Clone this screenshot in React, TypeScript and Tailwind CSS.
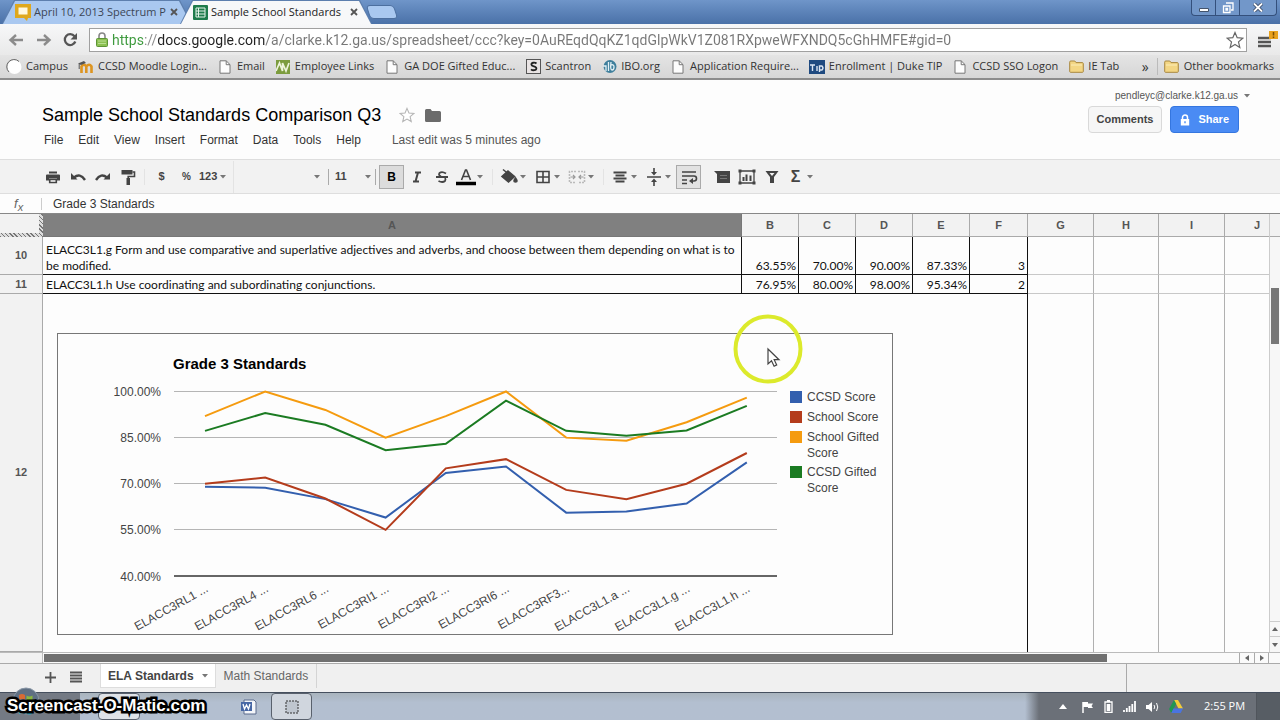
import { useState, type ReactNode } from "react";
import clsx from "clsx";

/* ---------- data ---------- */

const menus = ["File", "Edit", "View", "Insert", "Format", "Data", "Tools", "Help"];

const rows = [
  {
    n: 10,
    text: "ELACC3L1.g Form and use comparative and superlative adjectives and adverbs, and choose between them depending on what is to be modified.",
    values: ["63.55%", "70.00%", "90.00%", "87.33%", "3"],
    height: "h-[38px]",
  },
  {
    n: 11,
    text: "ELACC3L1.h Use coordinating and subordinating conjunctions.",
    values: ["76.95%", "80.00%", "98.00%", "95.34%", "2"],
    height: "h-[19px]",
  },
];

const standards = ["RL1 ...", "RL4 ...", "RL6 ...", "RI1 ...", "RI2 ...", "RI6 ...", "RF3...", "L1.a ...", "L1.g ...", "L1.h ..."];

const series = [
  { name: ["CCSD Score"], color: "#335fae", values: [69, 68.7, 65, 59, 73.5, 75.6, 60.6, 61, 63.55, 76.95] },
  { name: ["School Score"], color: "#b43c1c", values: [70, 72, 65.2, 55, 75, 78, 68, 65, 70, 80] },
  { name: ["School Gifted", "Score"], color: "#f59b0f", values: [92, 100, 94, 85, 92, 100, 85, 84, 90, 98] },
  { name: ["CCSD Gifted", "Score"], color: "#1b7b22", values: [87.2, 93, 89.2, 80.9, 83, 97, 87.2, 85.6, 87.33, 95.34] },
];

/* ---------- browser icons ---------- */

const PageIcon = () => (
  <svg viewBox="0 0 12 14" className="h-[14px] w-3">
    <path d="M1 .8h6.2L11 4.6v8.6H1z" fill="#fdfdfd" stroke="#777" />
    <path d="M7.2 1v3.7H11" fill="none" stroke="#777" />
  </svg>
);

const FolderIcon = () => (
  <svg viewBox="0 0 15 13" className="h-[13px] w-[15px]">
    <path d="M.7 11.5V2.2C.7 1.4 1 1 1.8 1h4l1.2 1.6h6.3c.6 0 1 .4 1 1v7.9c0 .5-.3.8-.8.8h-12c-.5 0-.8-.3-.8-.8z" fill="#f3d684" stroke="#a8873f" />
    <path d="M2 5h11" stroke="#fbedb8" />
  </svg>
);

const CampusIcon = () => (
  <svg viewBox="0 0 16 16" className="size-4">
    <circle cx="8.5" cy="8" r="7" fill="#fff" />
    <path d="M13 2.5A7 7 0 1 0 3 13" fill="none" stroke="#666" />
  </svg>
);

const MoodleIcon = () => (
  <svg viewBox="0 0 16 16" className="size-4">
    <path d="M3.5 14V7.5q2.500-3.500 4.800 0V14M8.300 7.500q3-3.500 5.200 0V14" fill="none" stroke="#dd9420" strokeWidth="2.6" />
    <path d="M0 4.500 6 2l2 2-5 2z" fill="#555" />
    <path d="M1.200 5v5" stroke="#555" />
  </svg>
);

const EmployeeIcon = () => (
  <svg viewBox="0 0 14 14" className="size-[14px]">
    <rect width="14" height="14" fill="#7c9c3e" />
    <path d="M0 11 3.500 3l3 8V3l3.500 8L13 3" fill="none" stroke="#eef4dc" strokeWidth="1.7" />
  </svg>
);

const ScantronIcon = () => (
  <svg viewBox="0 0 15 15" className="size-[15px]">
    <rect x=".5" y=".5" width="14" height="14" fill="#e9e4e4" stroke="#555" />
    <path d="M10.500 4.500C9 3.200 5.300 3.400 5.400 5.600c.2 2.300 5 1.200 5 3.700 0 2.200-3.700 2.500-5.400 1" fill="none" stroke="#222" strokeWidth="1.8" />
  </svg>
);

const IboIcon = () => (
  <svg viewBox="0 0 15 15" className="size-[15px]">
    <circle cx="8" cy="7.500" r="6.500" fill="#3f7f9c" />
    <path d="M1 7h3v5M6.500 3v9M9 3q-1 8 1 8t2-3-3-2" fill="none" stroke="#e4f1f5" strokeWidth="1.300" />
  </svg>
);

const DukeIcon = () => (
  <svg viewBox="0 0 16 14" className="h-[14px] w-4">
    <rect width="16" height="14" fill="#1f4a80" />
    <path d="M1 5h5M3.500 5v6M8 6v5M10.500 12V6h2.500q2 2 0 4h-2" fill="none" stroke="#dbe5f2" strokeWidth="1.400" />
  </svg>
);

const bookmarks = [
  { name: "Campus", icon: CampusIcon },
  { name: "CCSD Moodle Login...", icon: MoodleIcon },
  { name: "Email", icon: PageIcon },
  { name: "Employee Links", icon: EmployeeIcon },
  { name: "GA DOE Gifted Educ...", icon: PageIcon },
  { name: "Scantron", icon: ScantronIcon },
  { name: "IBO.org", icon: IboIcon },
  { name: "Application Require...", icon: PageIcon },
  { name: "Enrollment | Duke TIP", icon: DukeIcon },
  { name: "CCSD SSO Logon", icon: PageIcon },
  { name: "IE Tab", icon: FolderIcon },
];

const Star = ({ className }: { className: string }) => (
  <svg viewBox="0 0 18 18" className={className}>
    <path d="m9 1.500 2.200 5.200 5.600.5-4.300 3.700 1.300 5.500L9 13.500l-4.800 2.900 1.300-5.500L1.200 7.200l5.600-.5z" fill="#fff" stroke="currentColor" strokeWidth="1.200" />
  </svg>
);

const Caret = () => (
  <svg viewBox="0 0 6 4" className="h-1 w-[6px] shrink-0">
    <path d="M0 0h6L3 3.500z" fill="#777" />
  </svg>
);

/* ---------- browser chrome ---------- */

function BrowserTab({ title, active, width, icon }: { title: string; active?: boolean; width: string; icon: ReactNode }) {
  return (
    <div className={clsx("relative -mr-3 flex h-6 items-center", width, active && "z-10")}>
      <div className="absolute inset-x-0 top-0 bottom-0 bg-[#5d7fae] [clip-path:polygon(0_100%,12px_0,calc(100%-12px)_0,100%_100%)]" />
      <div
        className={clsx(
          "absolute inset-x-px top-px bottom-0 [clip-path:polygon(0_100%,12px_0,calc(100%-12px)_0,100%_100%)]",
          active ? "bg-[#f7f8f9]" : "bg-[#a9c8f0]"
        )}
      />
      <button className="relative ml-[13px] flex min-w-0 flex-1 items-center gap-[3px]">
        <span className="shrink-0">{icon}</span>
        <span className={clsx("flex-1 text-left whitespace-nowrap", active ? "text-[#222]" : "text-[#3c4656]")}>{title}</span>
      </button>
      <button aria-label="Close tab" className="relative mr-[14px] text-[#555]">
        <svg viewBox="0 0 8 8" className="size-2">
          <path d="m1 1 6 6M7 1 1 7" stroke="currentColor" strokeWidth="1.800" />
        </svg>
      </button>
    </div>
  );
}

function TabStrip() {
  return (
    <div className="flex h-6 items-start bg-linear-to-b from-[#6f95c9] to-[#4a71a8] pl-[2px] text-[11px]">
      <BrowserTab
        title="April 10, 2013 Spectrum P"
        width="w-[190px]"
        icon={
          <svg viewBox="0 0 16 17" className="h-[17px] w-4">
            <path d="M0 0h16v14h-3l-1 3-3-3H0z" fill="#dfa81d" />
            <path d="M3.500 3.500h9v7h-9z" fill="#fff8df" />
          </svg>
        }
      />
      <BrowserTab
        title="Sample School Standards"
        width="w-[192px]"
        active
        icon={
          <svg viewBox="0 0 15 15" className="size-[15px]">
            <rect width="15" height="15" rx="1" fill="#1e7b4b" />
            <path d="M3 3h9v9H3zM3 6h9M3 9h9M5.500 3v9" fill="none" stroke="#e5f3ea" />
          </svg>
        }
      />
      <button aria-label="New tab" className="mt-[5px] ml-2 h-[14px] w-7 -skew-x-[-18deg] rounded-sm border border-[#4c6f9f] bg-[#a9c8f0]" />
      <div className="mr-[3px] ml-auto flex h-4 items-stretch rounded-b border border-t-0 border-[#34507c] bg-[#7297c9] text-white">
        <button aria-label="Minimize" className="flex w-6 items-center justify-center border-r border-[#34507c]">
          <svg viewBox="0 0 10 4" className="mt-1 h-1 w-[10px]">
            <path d="M.5.5h9v3h-9z" fill="#fff" stroke="#44546c" />
          </svg>
        </button>
        <button aria-label="Restore" className="flex w-6 items-center justify-center border-r border-[#34507c]">
          <svg viewBox="0 0 12 12" className="size-3">
            <path d="M4 1h7v7H9M1.500 4h6.500v6.500H1.500zM4 6.500h1.500v1.500H4z" fill="none" stroke="#fff" strokeWidth="1.300" />
          </svg>
        </button>
        <button aria-label="Close window" className="flex w-9 items-center justify-center">
          <svg viewBox="0 0 10 9" className="h-[9px] w-[10px]">
            <path d="m1 .5 8 8M9 .5l-8 8" stroke="#3a4a66" strokeWidth="3.500" />
            <path d="m1 .5 8 8M9 .5l-8 8" stroke="#fff" strokeWidth="1.800" />
          </svg>
        </button>
      </div>
    </div>
  );
}

function AddressBar() {
  return (
    <div className="flex h-[31px] items-center bg-linear-to-b from-[#f7f8f9] to-[#e9e9e9] pr-[2px] pl-2 text-[#666]">
      <button aria-label="Back" className="w-[28px]">
        <svg viewBox="0 0 16 14" className="h-[14px] w-4">
          <path d="M8 2 2.500 7 8 12M2.500 7H15" fill="none" stroke="#8b8b8b" strokeWidth="2.400" />
        </svg>
      </button>
      <button aria-label="Forward" className="w-[26px]">
        <svg viewBox="0 0 16 14" className="h-[14px] w-4">
          <path d="m8 2 5.500 5L8 12M13.500 7H1" fill="none" stroke="#8b8b8b" strokeWidth="2.400" />
        </svg>
      </button>
      <button aria-label="Reload" className="w-[27px]">
        <svg viewBox="0 0 16 16" className="size-4">
          <path d="M12.500 4.300A5.400 5.400 0 1 0 13.300 9.500" fill="none" stroke="#555" strokeWidth="2.300" />
          <path d="M15 1v6.500H8.500z" fill="#555" />
        </svg>
      </button>
      <div className="flex h-6 flex-1 items-center border border-[#a0a0a0] bg-white pr-[2px] pl-[6px]">
        <svg viewBox="0 0 12 15" className="mr-[4px] h-[15px] w-3">
          <path d="M3 7V4a3 3 0 0 1 6 0v3" fill="none" stroke="#888" strokeWidth="1.600" />
          <rect x=".5" y="6.500" width="11" height="8" rx="1" fill="#8cc152" stroke="#5d9436" />
          <path d="M2 9h8M2 11.500h8" stroke="#b9de93" />
        </svg>
        <input
          aria-label="Address"
          defaultValue="https://docs.google.com/a/clarke.k12.ga.us/spreadsheet/ccc?key=0AuREqdQqKZ1qdGlpWkV1Z081RXpweWFXNDQ5cGhHMFE#gid=0"
          className="min-w-0 flex-1 bg-[linear-gradient(to_right,#3d9a3d_0_32px,#888_32px_46px,#222_46px_153px,#777_153px)] bg-clip-text pt-px font-[Roboto,sans-serif] text-[14px] text-transparent outline-none"
        />
        <button aria-label="Bookmark this page">
          <Star className="size-[18px] text-[#666]" />
        </button>
      </div>
      <button aria-label="Menu" className="ml-[11px]">
        <svg viewBox="0 0 20 20" className="size-5">
          <path d="M0 8h13M0 12h13M0 16h13" stroke="#555" strokeWidth="2.600" />
          <rect x="11" y="1" width="9" height="8" fill="#e8a11c" />
          <path d="M15.500 2v3.500M15.500 6.500V8" stroke="#7a4c00" strokeWidth="1.500" />
        </svg>
      </button>
    </div>
  );
}

function BookmarksBar() {
  return (
    <nav className="flex h-[25px] items-center border-b-2 border-[#8c8c8c] bg-linear-to-b from-[#e4e4e4] to-[#d6d6d6] px-[6px] text-[11px] whitespace-nowrap text-[#333]">
      <div className="flex flex-1 items-center gap-[10px]">
        {bookmarks.map((b) => (
          <a key={b.name} href="#" className="flex items-center gap-1">
            <span className="flex w-4 justify-center">
              <b.icon />
            </span>
            {b.name}
          </a>
        ))}
      </div>
      <button className="mr-2 text-[14px]" aria-label="More bookmarks">»</button>
      <a href="#" className="flex items-center gap-[5px] border-l border-[#bbb] pl-[6px]">
        <FolderIcon />
        Other bookmarks
      </a>
    </nav>
  );
}

/* ---------- document header ---------- */

function DocHeader() {
  return (
    <header className="flex h-[79px] justify-between pr-[30px] pl-[42px]">
      <div className="pt-[22px]">
        <div className="flex items-center">
          <h1 className="text-[18px] leading-[26px] text-black">Sample School Standards Comparison Q3</h1>
          <button aria-label="Star" className="ml-[18px]">
            <Star className="size-4 text-[#b5b5b5]" />
          </button>
          <button aria-label="Move to folder" className="ml-[10px]">
            <svg viewBox="0 0 16 13" className="h-[13px] w-4">
              <path d="M0 1.500Q0 0 1.500 0h4L7 2h7.500Q16 2 16 3.500v8q0 1.500-1.500 1.500h-13Q0 13 0 11.500z" fill="#6b6b6b" />
            </svg>
          </button>
        </div>
        <div className="mt-[2px] flex items-center gap-[15px] pl-[2px] text-[12px] leading-5 text-[#333]">
          {menus.map((m) => (
            <button key={m}>{m}</button>
          ))}
          <a href="#" className="ml-4 text-[#555]">
            Last edit was 5 minutes ago
          </a>
        </div>
      </div>
      <div className="flex flex-col pt-2">
        <button className="flex items-center gap-[6px] self-end text-[10px] leading-4 text-[#555]">
          pendleyc@clarke.k12.ga.us <Caret />
        </button>
        <div className="mt-[2px] mr-[11px] flex gap-2 text-[11px] font-bold">
          <button className="h-[27px] rounded-sm border border-[#d9d9d9] bg-[#f6f6f6] px-2 text-[#444]">Comments</button>
          <button className="flex h-[27px] items-center gap-2 rounded-sm border border-[#3576df] bg-[#4a8bf4] px-[9px] text-white">
            <svg viewBox="0 0 10 12" className="h-3 w-[10px]">
              <path d="M2.500 5V3.500a2.500 2.500 0 0 1 5 0V5" fill="none" stroke="#fff" strokeWidth="1.500" />
              <path d="M.8 5h8.400v6.500H.8zM4.300 7.200v2h1.400v-2z" fill="#fff" fillRule="evenodd" />
            </svg>
            Share
          </button>
        </div>
      </div>
    </header>
  );
}

/* ---------- toolbar ---------- */

function Tool({ label, on, menu, children }: { label: string; on?: boolean; menu?: boolean; children: ReactNode }) {
  return (
    <button
      aria-label={label}
      className={clsx("flex h-6 items-center", menu ? "w-[34px]" : "w-[25px]", on && "border border-[#aaa] bg-[#e2e2e2]")}
    >
      <span className="flex flex-1 items-center justify-center">{children}</span>
      {menu && (
        <span className="flex w-[11px]">
          <Caret />
        </span>
      )}
    </button>
  );
}

const Icon = ({ children }: { children: ReactNode }) => (
  <svg viewBox="0 0 18 18" className="size-[18px]" fill="none" stroke="#444" strokeWidth="1.600">
    {children}
  </svg>
);

const Divider = ({ dark }: { dark?: boolean }) => <span className={clsx("h-4 w-px", dark ? "bg-[#aaa]" : "mx-1 bg-[#e3e3e3]")} />;

function Toolbar() {
  const [bold, setBold] = useState(true);

  return (
    <div className="flex h-[35px] items-center border-y border-[#dedede] bg-[#f2f2f2] pl-10 text-[11px] font-bold text-[#444]">
      <Tool label="Print">
        <Icon>
          <path d="M5 3.500h8v2H5zM3 6.500h12q1 0 1 1v5h-3v-2H5v2H2v-5q0-1 1-1z" fill="#444" stroke="none" />
          <path d="M5.700 11.500h6.600v3H5.700z" fill="#fff" />
        </Icon>
      </Tool>
      <Tool label="Undo">
        <Icon>
          <path d="M2 5v6.500h6.500z" fill="#444" stroke="none" />
          <path d="M5 9.500q6-5 11 2.500" strokeWidth="2.400" />
        </Icon>
      </Tool>
      <Tool label="Redo">
        <Icon>
          <path d="M16 5v6.500H9.500z" fill="#444" stroke="none" />
          <path d="M13 9.500Q7 4.500 2 12" strokeWidth="2.400" />
        </Icon>
      </Tool>
      <Tool label="Paint format">
        <Icon>
          <path d="M2.500 2h11v4.500h-11zM7.500 10h3.500v7H7.500z" fill="#444" stroke="none" />
          <path d="M13.500 4h2v4.500H9.200V11" />
        </Icon>
      </Tool>
      <Divider />
      <Tool label="Format as currency">$</Tool>
      <Tool label="Format as percent">
        <span className="text-[10px]">%</span>
      </Tool>
      <button aria-label="More formats" className="flex h-6 w-[34px] items-center gap-[3px]">
        123
        <Caret />
      </button>
      <span className="h-8 w-px bg-[#e3e3e3]" />
      <label className="flex w-[94px] items-center pr-2">
        <select aria-label="Font" className="min-w-0 flex-1 appearance-none outline-none" defaultValue="">
          <option value=""></option>
          <option>Arial</option>
        </select>
        <Caret />
      </label>
      <Divider dark />
      <label className="flex w-[46px] items-center pr-1 pl-[6px]">
        <select aria-label="Font size" className="min-w-0 flex-1 appearance-none outline-none">
          <option>11</option>
        </select>
        <Caret />
      </label>
      <Divider dark />
      <span className="w-[3px]" />
      <button
        aria-label="Bold"
        onClick={() => setBold(!bold)}
        className={clsx("h-6 w-[25px] text-[12px] font-black text-black", bold && "border border-[#aaa] bg-[#dcdcdc]")}
      >
        B
      </button>
      <Tool label="Italic">
        <Icon>
          <path d="M7 4.500h6M5 13.500h6M10 4.500l-2.500 9" strokeWidth="2" />
        </Icon>
      </Tool>
      <Tool label="Strikethrough">
        <Icon>
          <path d="M13 5.500q-4-2.500-6.500-.5-1.500 2 1.500 3.500M5.500 13q4 2 6.500 0 1-1.500 0-3M3 9h12" strokeWidth="1.800" />
        </Icon>
      </Tool>
      <Tool label="Text color" menu>
        <svg viewBox="0 0 20 18" className="h-[18px] w-5" fill="none" stroke="#444" strokeWidth="1.600">
          <path d="M5.500 12 9.500 2h1l4 10M7 8.500h6" />
          <path d="M0 15.500h20" stroke="#000" strokeWidth="3.500" />
        </svg>
      </Tool>
      <Divider />
      <Tool label="Fill color" menu>
        <Icon>
          <path d="m8 3 6.500 5.500-6 5.500L2 8.500z" fill="#444" />
          <path d="m3 1.500 5 4M15.500 10q3 4 0 4t0-4z" fill="#444" />
        </Icon>
      </Tool>
      <Tool label="Borders" menu>
        <Icon>
          <path d="M3 3.500h12v11H3zM9 3.500v11M3 9h12" />
        </Icon>
      </Tool>
      <Tool label="Merge cells" menu>
        <Icon>
          <path d="M8 3.500H1.500v11H8M10 3.500h6.500v11H10" stroke="#bbb" strokeDasharray="2 1" />
          <path d="M2.500 9h4M11.500 9h4M5 7l2 2-2 2M13 7l-2 2 2 2" stroke="#999" strokeWidth="1.200" />
        </Icon>
      </Tool>
      <Divider />
      <Tool label="Horizontal align" menu>
        <Icon>
          <path d="M2.500 4.500h13M4.500 7.500h9M2.500 10.500h13M4.500 13.500h9" strokeWidth="1.900" />
        </Icon>
      </Tool>
      <Tool label="Vertical align" menu>
        <Icon>
          <path d="M2 9h14M9 0v5M9 18v-5" />
          <path d="m6 4 3 3.500L12 4zM6 14l3-3.500 3 3.500z" fill="#444" stroke="none" />
        </Icon>
      </Tool>
      <Tool label="Wrap text" on>
        <Icon>
          <path d="M2 4h14M2 8h12q2.500 0 2.500 2.500T14 13h-2M2 12h5M2 15.500h5" />
          <path d="m13 10-4 3 4 3z" fill="#444" stroke="none" />
        </Icon>
      </Tool>
      <span className="w-2" />
      <Tool label="Insert comment">
        <Icon>
          <path d="M1 3h16v12H4V6z" fill="#444" stroke="none" />
          <path d="M7 7.500h7M7 10.500h7" stroke="#777" strokeWidth="1" />
        </Icon>
      </Tool>
      <Tool label="Insert chart">
        <Icon>
          <path d="M2 3h14v12H2z" strokeWidth="1.300" />
          <path d="M5.500 13V9M8.500 13V6.500M12.500 13V7.500" strokeWidth="2" />
          <path d="M.5 1.500h3v3h-3zM14.500 1.500h3v3h-3zM.5 13.500h3v3h-3zM14.500 13.500h3v3h-3z" fill="#444" stroke="none" />
        </Icon>
      </Tool>
      <Tool label="Filter">
        <Icon>
          <path d="M2.500 3h13L11 9v6H7V9zM6.500 5l2.500 3 2.500-3z" fill="#444" fillRule="evenodd" stroke="none" />
        </Icon>
      </Tool>
      <Tool label="Functions" menu>
        <span className="text-[16px]">Σ</span>
      </Tool>
    </div>
  );
}

/* ---------- chart ---------- */

const px = (i: number) => 147 + i * 60.2;
const py = (v: number) => 57.5 + (100 - v) * 3.075;

function StandardsChart() {
  return (
    <svg viewBox="0 0 834 300" className="h-[302px] w-[836px] border border-[#777] bg-[#fdfdfd] text-[12px]" fill="#444">
      <text x="115" y="35" className="text-[15px] font-bold" fill="#000">
        Grade 3 Standards
      </text>
      {[100, 85, 70, 55, 40].map((v) => (
        <g key={v}>
          <line
            x1="116"
            x2="719"
            y1={v === 40 ? 242 : Math.floor(py(v)) + 0.5}
            y2={v === 40 ? 242 : Math.floor(py(v)) + 0.5}
            stroke={v === 40 ? "#666" : "#b5b5b5"}
            strokeWidth={v === 40 ? 2 : 1}
          />
          <text x="103" y={Math.floor(py(v)) + 5} textAnchor="end">
            {v}.00%
          </text>
        </g>
      ))}
      {series.map((s) => (
        <polyline key={s.color} points={s.values.map((v, i) => `${px(i)},${py(v)}`).join(" ")} fill="none" stroke={s.color} strokeWidth="2" />
      ))}
      {standards.map((s, i) => (
        <text key={s} textAnchor="end" transform={`translate(${px(i) + 4} 257) rotate(-29)`}>
          ELACC3{s}
        </text>
      ))}
      {series.map((s, i) => {
        const y = [57, 77, 97, 132][i];
        return (
          <g key={s.color}>
            <rect x="732" y={y} width="12" height="12" fill={s.color} />
            {s.name.map((line, j) => (
              <text key={line} x="749" y={y + 10 + j * 16}>
                {line}
              </text>
            ))}
          </g>
        );
      })}
    </svg>
  );
}

/* ---------- grid ---------- */

const thClass = "border-r border-b border-[#aaa] bg-[#f2f2f2] font-bold text-[#555]";

function Grid() {
  return (
    <table className="h-full w-full table-fixed border-separate border-spacing-0 text-[11px]">
      <colgroup>
        <col className="w-[43px]" />
        <col />
        <col className="w-[57px]" />
        <col className="w-[57px]" />
        <col className="w-[57px]" />
        <col className="w-[57px]" />
        <col className="w-[58px]" />
        <col className="w-[66px]" />
        <col className="w-[65px]" />
        <col className="w-[66px]" />
        <col className="w-[44px]" />
      </colgroup>
      <thead>
        <tr>
          <th className="h-[23px] bg-[repeating-linear-gradient(45deg,#777_0_1px,#ddd_1px_3px)] p-0 pr-1 pb-1">
            <div className="h-[19px] bg-[#f2f2f2]" />
          </th>
          <th className="border-r border-b border-[#777] bg-[#808080] p-0 font-bold text-[#555]">A</th>
          {["B", "C", "D", "E", "F", "G", "H", "I"].map((c) => (
            <th key={c} className={thClass}>
              {c}
            </th>
          ))}
          <th className="border-b border-[#aaa] bg-[#f2f2f2] p-0 pl-5 font-bold text-[#555]">J</th>
        </tr>
      </thead>
      <tbody>
        {rows.map((r) => (
          <tr key={r.n} className={r.height}>
            <th className={clsx(thClass, "p-0")}>{r.n}</th>
            <td className="border-r border-b border-[#111] p-0 pl-[3px] align-bottom font-[Lato,sans-serif] text-[12px] leading-4 text-[#111]">
              {r.text}
            </td>
            {r.values.map((v, i) => (
              <td
                key={i}
                className="border-r border-b border-[#111] p-0 pr-[2px] text-right align-bottom font-[Lato,sans-serif] text-[12px] leading-4 text-[#111]"
              >
                {v}
              </td>
            ))}
            {[0, 1, 2].map((i) => (
              <td key={i} className="border-r border-b border-r-[#b0b0b0] border-b-[#c8c8c8] p-0" />
            ))}
            <td className="border-b border-[#c8c8c8] p-0" />
          </tr>
        ))}
        <tr>
          <th className={clsx(thClass, "p-0")}>12</th>
          <td colSpan={6} className="border-r border-[#111] p-0 pt-[39px] pl-[14px] align-top">
            <StandardsChart />
          </td>
          {[0, 1, 2].map((i) => (
            <td key={i} className="border-r border-[#b0b0b0] p-0" />
          ))}
          <td />
        </tr>
      </tbody>
    </table>
  );
}

const Arrow = ({ d }: { d: string }) => (
  <svg viewBox="0 0 6 6" className="size-[6px]">
    <path d={d} fill="#666" />
  </svg>
);

function VerticalScroll() {
  return (
    <div className="flex w-[11px] flex-col border-l border-[#ccc] bg-[#f7f7f7]">
      <div className="h-[23px] border-b border-[#aaa] bg-[#f2f2f2]" />
      <div className="mt-[51px] ml-px h-14 w-2 bg-[#777]" />
      <button aria-label="Scroll up" className="mt-auto flex h-4 items-center justify-center border-y border-[#ccc]">
        <Arrow d="M0 5h6L3 1z" />
      </button>
      <button aria-label="Scroll down" className="flex h-[15px] items-center justify-center">
        <Arrow d="M0 1h6L3 5z" />
      </button>
    </div>
  );
}

function HorizontalScroll() {
  return (
    <div className="flex h-[11px] border-t border-[#bbb] bg-[#fafafa]">
      <div className="w-[43px] border-r border-[#bbb] bg-[#f2f2f2]" />
      <div className="flex flex-1 items-center px-px">
        <div className="h-2 w-[89%] bg-[#707070]" />
      </div>
      <button aria-label="Scroll left" className="flex w-[15px] items-center justify-center border-l border-[#aaa]">
        <Arrow d="M5 0v6L1 3z" />
      </button>
      <button aria-label="Scroll right" className="mr-[11px] flex w-[15px] items-center justify-center border-x border-[#aaa]">
        <Arrow d="M1 0v6l4-3z" />
      </button>
    </div>
  );
}

function SheetTabs() {
  return (
    <div className="flex h-[29px] items-start border-t border-[#aaa] bg-[#f0f0f0] text-[12px] text-[#666]">
      <button aria-label="Add sheet" className="ml-[45px] flex h-[26px] w-[11px] items-center">
        <svg viewBox="0 0 11 11" className="size-[11px]">
          <path d="M5.500 0v11M0 5.500h11" stroke="#555" strokeWidth="1.800" />
        </svg>
      </button>
      <button aria-label="All sheets" className="mr-[18px] ml-[14px] flex h-[26px] w-3 items-center">
        <svg viewBox="0 0 12 12" className="size-3">
          <path d="M0 1.500h12M0 4.500h12M0 7.500h12M0 10.500h12" stroke="#555" strokeWidth="1.800" />
        </svg>
      </button>
      <button className="flex h-6 items-center gap-2 border-x border-b border-[#ddd] bg-white px-[7px] font-bold text-[#444]">
        ELA Standards
        <Caret />
      </button>
      <button className="h-6 border-r border-[#d4d4d4] px-2">Math Standards</button>
      <div className="mr-[153px] ml-auto h-full w-px bg-[#aaa]" />
    </div>
  );
}

/* ---------- desktop ---------- */

function Taskbar() {
  return (
    <footer className="flex h-7 items-stretch border-t border-[#454f5e] bg-linear-to-b from-[#a9b4bd] to-[#b3bfd0] to-35%">
      <div className="w-20 bg-[#747a84]">
        <button aria-label="Start" className="-mt-[6px] ml-3">
          <svg viewBox="0 0 28 28" className="size-7">
            <circle cx="14" cy="14" r="13" fill="#5f6f82" stroke="#8896a6" />
            <path d="M7 8q3-2 6 0v5q-3-2-6 0z" fill="#d86b34" />
            <path d="M14.500 8.500q3 2 6 0v5q-3 2-6 0z" fill="#8bb83c" />
            <path d="M7 15q3-2 6 0v12q-3-2-6 0z" fill="#27b4d6" />
            <path d="M14.500 15.500q3 2 6 0v11q-3 2-6 0z" fill="#27b4d6" />
          </svg>
        </button>
      </div>
      <button aria-label="Browser" className="ml-[18px] w-[42px] rounded-sm border border-[#59616d] bg-[#dfe3e8]" />
      <button aria-label="Word" className="ml-[101px] flex items-center">
        <svg viewBox="0 0 16 16" className="size-4">
          <path d="M3 1h10l2 2v12H3z" fill="#f4f6fa" stroke="#5b6b8c" />
          <rect y="3" width="11" height="9" fill="#4767a5" />
          <path d="m2 5 1.500 5L5.500 6l2 4L9 5" fill="none" stroke="#fff" strokeWidth="1.300" />
        </svg>
      </button>
      <button aria-label="Screen recorder" className="ml-[14px] flex w-[41px] items-center justify-center rounded-sm border border-[#59616d] bg-[#d0d6de]">
        <svg viewBox="0 0 14 14" className="size-[14px]">
          <path d="M1 1h12v12H1z" fill="#bfc6cf" stroke="#333" strokeDasharray="2 1" />
        </svg>
      </button>
      <div className="ml-auto flex w-[231px] items-center gap-[10px] bg-[linear-gradient(to_right,transparent,#6b7078_14px)] pl-[34px] font-['Open_Sans',sans-serif] text-[11px] text-white">
        <button aria-label="Show hidden icons" className="mr-1">
          <svg viewBox="0 0 8 5" className="h-[5px] w-2">
            <path d="m0 5 4-5 4 5z" fill="#fff" />
          </svg>
        </button>
        <svg viewBox="0 0 13 12" className="h-3 w-[13px]">
          <path d="M2 1v11" stroke="#fff" strokeWidth="1.500" />
          <path d="M2 1h5v1.500h5L10.500 5 12 7H7V6H2z" fill="#fff" />
        </svg>
        <svg viewBox="0 0 9 13" className="h-[13px] w-[9px]">
          <path d="M1 2h7v10.500H1z" fill="none" stroke="#fff" strokeWidth="1.300" />
          <path d="M3 0h3v2H3zM2.700 4h3.600v7H2.700z" fill="#fff" />
        </svg>
        <svg viewBox="0 0 13 11" className="h-[11px] w-[13px]">
          <path d="M1 9v2M3.800 7v4M6.500 5v6M9.300 3v8M12 0v11" stroke="#fff" strokeWidth="1.800" />
        </svg>
        <svg viewBox="0 0 13 12" className="h-3 w-[13px]">
          <path d="M0 4h2.500L6 1v10L2.500 8H0z" fill="#fff" />
          <path d="M8 4q1.500 2 0 4M10.500 2q2.500 4 0 8" fill="none" stroke="#fff" />
        </svg>
        <svg viewBox="0 0 14 13" className="h-[13px] w-[14px]">
          <path d="M5 0h4l5 8.500H9.500z" fill="#f3cd3a" />
          <path d="m5 0 2.200 4L2.300 13 0 9z" fill="#219653" />
          <path d="M4.500 8.500H14L11.700 13H2.300z" fill="#4a74e0" />
        </svg>
        <time className="ml-[11px] whitespace-nowrap">2:55 PM</time>
      </div>
      <button aria-label="Show desktop" className="w-6 border-l border-[#50555c] bg-[#575d64]" />
    </footer>
  );
}

function Pointer() {
  return (
    <div className="pointer-events-none absolute top-[314px] left-[733px] z-20">
      <svg viewBox="0 0 70 70" className="size-[70px]">
        <circle cx="35" cy="35" r="32.500" fill="none" stroke="#dcea2c" strokeWidth="4" />
        <path d="M35 35v15l3.500-3.200 2.600 5.400 2.600-1.300-2.500-5.200H46z" fill="#fff" stroke="#444" strokeWidth="1.200" />
      </svg>
    </div>
  );
}

export default function App() {
  return (
    <div className="relative flex h-screen flex-col overflow-hidden bg-[#fdfdfd] font-['Liberation_Sans',Arial,sans-serif]">
      <div className="font-['Open_Sans',sans-serif]">
        <TabStrip />
        <AddressBar />
        <BookmarksBar />
      </div>
      <DocHeader />
      <Toolbar />
      <label className="flex h-5 items-center border-b border-[#888] pt-px text-[12px] text-[#333]">
        <span className="ml-[14px] w-7 border-r border-[#ccc] text-[13px] leading-3 text-[#666] italic">
          f<sub className="text-[11px]">x</sub>
        </span>
        <input aria-label="Formula" defaultValue="Grade 3 Standards" className="ml-[11px] flex-1 outline-none" />
      </label>
      <main className="flex min-h-0 flex-1">
        <div className="min-w-0 flex-1 overflow-hidden">
          <Grid />
        </div>
        <VerticalScroll />
      </main>
      <HorizontalScroll />
      <SheetTabs />
      <Taskbar />
      <Pointer />
      <div className="pointer-events-none absolute bottom-1 left-[7px] z-20 text-[17px] leading-5 font-bold text-white [paint-order:stroke] [-webkit-text-stroke:5px_black] [text-shadow:0_0_2px_black,0_0_3px_black]">
        Screencast-O-Matic.com
      </div>
    </div>
  );
}
